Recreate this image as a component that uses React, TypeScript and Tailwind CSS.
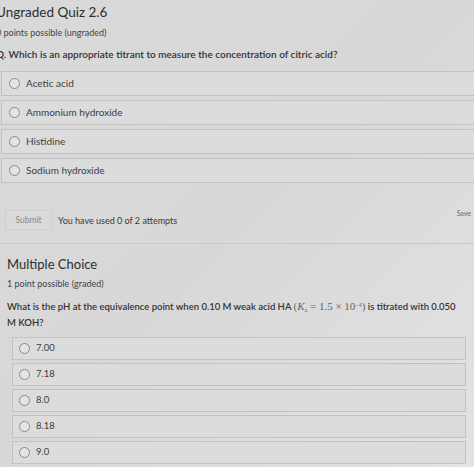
import React from "react";

const topOptions = ["Acetic acid", "Ammonium hydroxide", "Histidine", "Sodium hydroxide"];
const bottomOptions = ["7.00", "7.18", "8.0", "8.18", "9.0"];

function Radio() {
  return <span className="block w-[11px] h-[11px] rounded-full border border-[#8a8a8a] bg-[#e4e4e4] shrink-0" />;
}

function Option({ label, small }: { label: string; small?: boolean }) {
  return (
    <div
      className={`flex items-center border border-[#c2c2c2] bg-[#dcdcdc] ${
        small ? "h-[23px] pl-[6px] gap-[6px] text-[9.5px]" : "h-[25px] pl-[7px] gap-[6px] text-[10px]"
      } text-[#3c3c3c]`}
    >
      <Radio />
      <span>{label}</span>
    </div>
  );
}

export default function App() {
  return (
    <div className="w-[474px] h-[467px] overflow-hidden bg-gradient-to-br from-[#d9d9d9] via-[#d8d8d8] to-[#e3e3e3] font-['Lato',sans-serif] text-[#333]">
      {/* ungraded quiz */}
      <div className="-ml-[4px]">
        <h1 className="text-[13.5px] leading-[24px] text-[#2e2e2e]">Ungraded Quiz 2.6</h1>
        <p className="mt-[1px] text-[9px] leading-[16px] text-[#444]">0 points possible (ungraded)</p>
        <p className="mt-[4px] text-[10px] leading-[18px] font-semibold text-[#333]">
          Q. Which is an appropriate titrant to measure the concentration of citric acid?
        </p>
      </div>
      <div className="mt-[8px] ml-[1px] -mr-[4px] flex flex-col gap-[4px]">
        {topOptions.map((o) => (
          <Option key={o} label={o} />
        ))}
      </div>

      <div className="mt-[27px] flex items-center pl-[5px] pr-[3px]">
        <button className="h-[20px] w-[47px] border border-[#cfcfcf] bg-[#dadada] text-[8.5px] text-[#8a8a8a]">
          Submit
        </button>
        <span className="ml-[6px] mt-[1px] text-[9px] text-[#3a3a3a]">You have used 0 of 2 attempts</span>
        <span className="ml-auto -mt-[13px] text-[7px] text-[#6a6a6a]">Save</span>
      </div>

      <div className="mt-[13px] h-px bg-[#c8c8c8]" />

      {/* multiple choice */}
      <div className="pl-[7px] pr-[8px]">
        <h2 className="mt-[11px] text-[13px] leading-[18px] text-[#2e2e2e]">Multiple Choice</h2>
        <p className="mt-[4px] text-[9px] leading-[14px] text-[#444]">1 point possible (graded)</p>
        <p className="mt-[7px] text-[9.5px] leading-[16px] font-semibold text-[#333]">
          What is the pH at the equivalence point when 0.10 M weak acid HA{" "}
          <span className="font-['Liberation_Serif',serif] text-[11px] font-normal text-[#666]">
            (<i>K</i>
            <sub className="text-[6px] leading-none">a</sub> = 1.5 × 10
            <sup className="text-[6px] leading-none">−4</sup>)
          </span>{" "}
          is titrated with 0.050 M KOH?
        </p>
        <div className="mt-[6px] ml-[5px] flex flex-col gap-[3px]">
          {bottomOptions.map((o) => (
            <Option key={o} label={o} small />
          ))}
        </div>
      </div>
    </div>
  );
}
